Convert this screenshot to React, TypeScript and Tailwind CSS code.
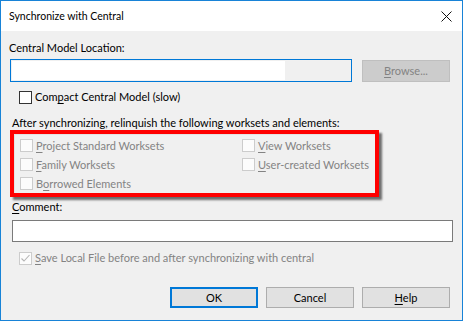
import React from 'react'

type BoxProps = {
    checked?: boolean
    disabled?: boolean
}

function CheckBox({ checked, disabled }: BoxProps) {
    return (
        <span
            className={
                disabled
                    ? 'flex h-[13px] w-[13px] shrink-0 items-center justify-center border border-[#cccccc] bg-[#fcfcfc]'
                    : 'flex h-[13px] w-[13px] shrink-0 items-center justify-center border border-[#333333] bg-white'
            }
        >
            {checked && (
                <svg width="11" height="11" viewBox="0 0 11 11">
                    <path
                        d="M1.5 5.5 L4 8 L9.5 2"
                        fill="none"
                        stroke={disabled ? '#b4b4b4' : '#222222'}
                        strokeWidth="1.1"
                    />
                </svg>
            )}
        </span>
    )
}

type OptionProps = {
    label: React.ReactNode
    checked?: boolean
    disabled?: boolean
}

function Option({ label, checked, disabled }: OptionProps) {
    return (
        <div className="flex items-center gap-x-[3px] whitespace-nowrap">
            <CheckBox checked={checked} disabled={disabled} />
            <span className={disabled ? 'text-[#838383]' : 'text-black'}>
                {label}
            </span>
        </div>
    )
}

function Key({ children }: { children: React.ReactNode }) {
    return <u className="underline decoration-1 underline-offset-2">{children}</u>
}

function DialogButton({
    children,
    focused
}: {
    children: React.ReactNode
    focused?: boolean
}) {
    return (
        <button
            type="button"
            className={
                focused
                    ? 'flex h-[21px] w-[88px] items-center justify-center border-2 border-[#0078d7] bg-[#e1e1e1] text-black'
                    : 'flex h-[21px] w-[88px] items-center justify-center border border-[#adadad] bg-[#e1e1e1] text-black'
            }
        >
            {children}
        </button>
    )
}

export default function App() {
    return (
        <div
            className="flex h-[321px] w-[463px] flex-col border border-[#1883d7] bg-[#f0f0f0] text-[11px] leading-[16px] text-black"
            style={{ fontFamily: 'Lato, sans-serif' }}
        >
            <div className="flex h-[30px] items-center justify-between bg-white pl-[8px] pr-[10px] text-[10.5px]">
                <span>Synchronize with Central</span>
                <svg width="11" height="11" viewBox="0 0 11 11">
                    <path d="M0.5 0.5 L10.5 10.5 M10.5 0.5 L0.5 10.5" stroke="#111111" strokeWidth="1" />
                </svg>
            </div>

            <div className="flex flex-col px-[8px]">
                <p className="mt-[9px]">Central Model Location:</p>
                <div className="mt-[3px] flex items-center gap-x-[10px]">
                    <div className="ml-[1px] flex h-[23px] w-[342px] border border-[#0078d7] bg-[#f0f0f0] p-[1px]">
                        <div className="h-full w-[273px] bg-white" />
                    </div>
                    <button
                        type="button"
                        className="flex h-[22px] w-[88px] items-center justify-center border border-[#bfbfbf] bg-[#cccccc] text-[#838383]"
                    >
                        <span>
                            <Key>B</Key>rowse...
                        </span>
                    </button>
                </div>

                <div className="mt-[7px] pl-[10px]">
                    <Option
                        label={
                            <>
                                Com<Key>p</Key>act Central Model (slow)
                            </>
                        }
                    />
                </div>

                <p className="mt-[11px] pl-[3px] leading-[14px]">
                    After synchronizing, relinquish the following worksets and elements:
                </p>

                <div className="ml-[1px] w-[369px] border-4 border-[#ff0000] shadow-[3px_3px_2px_rgba(0,0,0,0.55)]">
                    <div className="grid grid-cols-[222px_1fr] border-l border-t border-[#e3e3e3] pl-[5px] pt-[1px]">
                        <div className="flex h-[19px] items-center">
                            <Option disabled label={<><Key>P</Key>roject Standard Worksets</>} />
                        </div>
                        <div className="flex h-[19px] items-center">
                            <Option disabled label={<><Key>V</Key>iew Worksets</>} />
                        </div>
                        <div className="flex h-[19px] items-center">
                            <Option disabled label={<><Key>F</Key>amily Worksets</>} />
                        </div>
                        <div className="flex h-[19px] items-center">
                            <Option disabled label={<><Key>U</Key>ser-created Worksets</>} />
                        </div>
                        <div className="flex h-[19px] items-center">
                            <Option disabled label={<>B<Key>o</Key>rrowed Elements</>} />
                        </div>
                    </div>
                </div>

                <p className="mt-[2px] pl-[3px]">
                    <Key>C</Key>omment:
                </p>
                <div className="ml-[3px] mt-[5px] h-[22px] w-[441px] border border-[#7a7a7a] bg-white" />

                <div className="mt-[8px] pl-[10px]">
                    <Option
                        checked
                        disabled
                        label={
                            <>
                                <Key>S</Key>ave Local File before and after synchronizing with central
                            </>
                        }
                    />
                </div>

                <div className="mt-[21px] flex justify-end gap-x-[8px] pr-[4px]">
                    <DialogButton focused>OK</DialogButton>
                    <DialogButton>Cancel</DialogButton>
                    <DialogButton>
                        <span>
                            <Key>H</Key>elp
                        </span>
                    </DialogButton>
                </div>
            </div>
        </div>
    )
}
